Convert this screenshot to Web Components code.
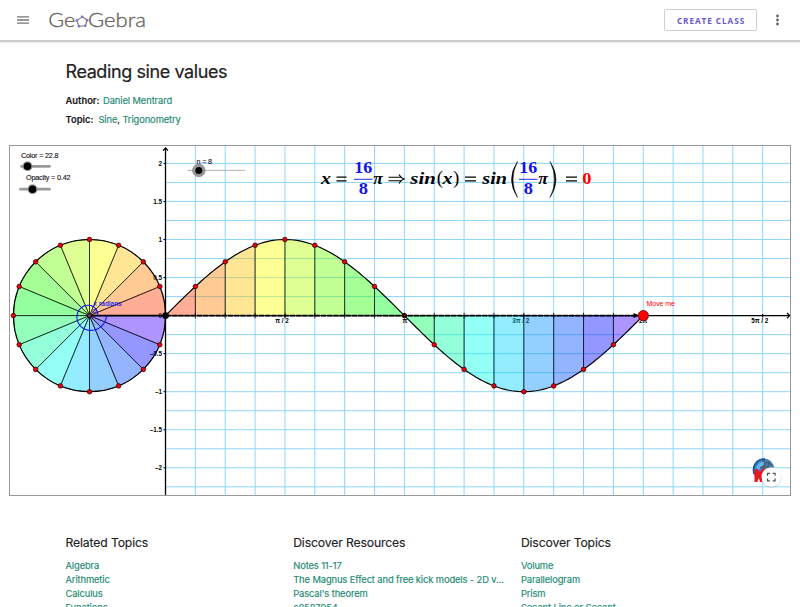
<!DOCTYPE html>
<html lang="en">
<head>
<meta charset="utf-8">
<title>Reading sine values – GeoGebra</title>
<style>
  html, body {
    margin: 0;
    height: 607px;
    overflow: hidden;
    background: #fff;
    font-family: Inter, "Liberation Sans", sans-serif;
    color: #222;
  }
</style>
</head>
<body>
<page-header>
  <geo-logo></geo-logo>
  <outline-button slot="action">CREATE CLASS</outline-button>
</page-header>
<resource-head heading="Reading sine values">
  <meta-line label="Author:"><a>Daniel Mentrard</a></meta-line>
  <meta-line label="Topic:" class="wide"><a>Sine</a>, <a>Trigonometry</a></meta-line>
</resource-head>
<sine-applet n="8"></sine-applet>
<page-footer>
  <link-list heading="Related Topics">
    <a>Algebra</a>
    <a>Arithmetic</a>
    <a>Calculus</a>
    <a>Functions</a>
  </link-list>
  <link-list heading="Discover Resources">
    <a>Notes 11-17</a>
    <a>The Magnus Effect and free kick models - 2D v...</a>
    <a>Pascal's theorem</a>
    <a>c8587954</a>
  </link-list>
  <link-list heading="Discover Topics">
    <a>Volume</a>
    <a>Parallelogram</a>
    <a>Prism</a>
    <a>Secant Line or Secant</a>
  </link-list>
</page-footer>

<script>
class PageHeader extends HTMLElement {
  constructor() {
    super();
    this.attachShadow({ mode: 'open' });
    this.shadowRoot.innerHTML = `
    <style>
      :host {
        display: flex;
        align-items: center;
        box-sizing: border-box;
        height: 42px;
        padding: 0 16px 0 17px;
        border-bottom: 2px solid #cdcdcd;
        box-shadow: 0 1px 1px #eee;
      }
      .menu { margin-right: 20px; }
      .spacer { flex: 1; }
      .more { margin-left: 14px; }
      svg { display: block; }
    </style>
    <svg class="menu" width="12" height="12" viewBox="0 0 12 12">
      <path d="M0 2.8h12M0 6h12M0 9.2h12" stroke="#777" stroke-width="1.3"/>
    </svg>
    <slot></slot>
    <span class="spacer"></span>
    <slot name="action"></slot>
    <svg class="more" width="13" height="14" viewBox="0 0 13 14" fill="#666">
      <circle cx="6.5" cy="3" r="1.4"/><circle cx="6.5" cy="7" r="1.4"/><circle cx="6.5" cy="11" r="1.4"/>
    </svg>
    `;
  }
}

class GeoLogo extends HTMLElement {
  constructor() {
    super();
    this.attachShadow({ mode: 'open' });
    this.shadowRoot.innerHTML = `
    <style>
      :host { display: block; }
      svg { display: block; }
      text {
        font: 300 19.5px Lato, "Liberation Sans", sans-serif;
        fill: #666;
        stroke: #666;
        stroke-width: 0.35px;
      }
    </style>
    <svg width="98" height="20" viewBox="49 10 98 20">
      <text x="48.3" y="26.8" textLength="27" lengthAdjust="spacingAndGlyphs">Ge</text>
      <text x="88" y="26.8" textLength="58" lengthAdjust="spacingAndGlyphs">Gebra</text>
      <path d="M82.2 16.8L87.2 20.2L85.2 25.7L79 26.2L76.8 20.6Z" fill="none" stroke="#777" stroke-width="1.1"/>
      <g fill="#7872dc">
        <circle cx="82.2" cy="16.8" r="1.3"/><circle cx="87.2" cy="20.2" r="1.3"/>
        <circle cx="85.2" cy="25.7" r="1.3"/><circle cx="79" cy="26.2" r="1.3"/>
        <circle cx="76.8" cy="20.6" r="1.3"/>
      </g>
    </svg>
    `;
  }
}

class OutlineButton extends HTMLElement {
  constructor() {
    super();
    this.attachShadow({ mode: 'open' });
    this.shadowRoot.innerHTML = `
    <style>
      :host {
        display: flex;
        align-items: center;
        justify-content: center;
        box-sizing: border-box;
        width: 93px;
        height: 22px;
        padding: 1px 0 0 1px;
        border: 1px solid #cfcfd2;
        border-radius: 2px;
        color: #6557d2;
        font: 700 8.2px "Open Sans", sans-serif;
        letter-spacing: 0.95px;
        white-space: nowrap;
      }
    </style>
    <slot></slot>
    `;
  }
}

class ResourceHead extends HTMLElement {
  constructor() {
    super();
    this.attachShadow({ mode: 'open' });
    this.shadowRoot.innerHTML = `
    <style>
      :host {
        display: block;
        box-sizing: border-box;
        height: 103px;
        padding: 18px 65.5px 0;
      }
      h1 {
        margin: 0 0 7px;
        font-size: 18px;
        line-height: 24px;
        font-weight: 400;
        letter-spacing: -0.41px;
        -webkit-text-stroke: 0.2px;
      }
    </style>
    <h1></h1>
    <slot></slot>
    `;
  }

  connectedCallback() {
    this.shadowRoot.querySelector('h1').textContent = this.getAttribute('heading');
  }
}

class MetaLine extends HTMLElement {
  constructor() {
    super();
    this.attachShadow({ mode: 'open' });
    this.shadowRoot.innerHTML = `
    <style>
      :host {
        display: block;
        font-size: 9.4px;
        line-height: 19px;
        letter-spacing: -0.11px;
        -webkit-text-stroke: 0.15px;
      }
      b { font-weight: 600; margin-right: 3.5px; letter-spacing: 0; }
      :host(.wide) b { margin-right: 5px; }
      ::slotted(a) { color: #1a8971; }
    </style>
    <b></b><slot></slot>
    `;
  }

  connectedCallback() {
    this.shadowRoot.querySelector('b').textContent = this.getAttribute('label');
  }
}

class PageFooter extends HTMLElement {
  constructor() {
    super();
    this.attachShadow({ mode: 'open' });
    this.shadowRoot.innerHTML = `
    <style>
      :host {
        display: grid;
        grid-template-columns: 212px 212px 212px;
        gap: 15.7px;
        padding: 37px 0 0 65.5px;
      }
    </style>
    <slot></slot>
    `;
  }
}

class LinkList extends HTMLElement {
  constructor() {
    super();
    this.attachShadow({ mode: 'open' });
    this.shadowRoot.innerHTML = `
    <style>
      :host { display: flex; flex-direction: column; }
      h2 {
        margin: 0 0 7px;
        font-size: 12.2px;
        line-height: 19px;
        font-weight: 400;
        letter-spacing: -0.13px;
        -webkit-text-stroke: 0.15px;
      }
      ::slotted(a) {
        font-size: 9.4px;
        line-height: 14px;
        letter-spacing: -0.12px;
        -webkit-text-stroke: 0.15px;
        color: #1a8971;
        white-space: nowrap;
      }
    </style>
    <h2></h2>
    <slot></slot>
    `;
  }

  connectedCallback() {
    this.shadowRoot.querySelector('h2').textContent = this.getAttribute('heading');
  }
}

class SineApplet extends HTMLElement {
  constructor() {
    super();
    this.attachShadow({ mode: 'open' });
    this.shadowRoot.innerHTML = `
    <style>
      :host { display: block; width: 782px; margin-left: 9px; }
      svg { display: block; font-family: "Liberation Sans", Arial, sans-serif; }
      .axis { font-size: 6.3px; font-weight: bold; fill: #000; }
      .label { font-size: 7.2px; fill: #111; stroke: #111; stroke-width: 0.12px; }
      .math { font: italic bold 17px "Liberation Serif", serif; }
      .math .up { font-style: normal; font-size: 16.5px; }
      .math .paren { font-weight: 400; font-size: 19px; }
      .blue { fill: #1212f0; }
      .red { fill: #f00; }
    </style>
    <svg width="782" height="351" viewBox="9 145 782 351"></svg>
    `;
    // origin of the graph, pixels per unit, pixels per strip
    this._ox = 165.5;
    this._oy = 315.6;
    this._unit = 76.1;
    this._step = 29.86;
    this._cx = 89.5;
  }

  connectedCallback() {
    this._n = Number(this.getAttribute('n'));
    this.shadowRoot.querySelector('svg').innerHTML =
      this._grid() + this._axes() + this._strips() + this._circle() +
      this._sliders() + this._formula() + this._corner() +
      '<rect x="9.5" y="145.5" width="781" height="350" fill="none" stroke="#999"/>';
  }

  _color(i) {
    return `hsla(${14 + i * 16}, 100%, 50%, 0.42)`;
  }

  _dot(x, y) {
    return `<circle cx="${x}" cy="${y}" r="2.3" fill="#e8000a" stroke="#200" stroke-width="0.7"/>`;
  }

  _grid() {
    let d = '';
    for (let i = 1; i <= 20; i++) {
      d += `M${this._ox + i * this._step} 146V495`;
    }
    for (let i = -9; i <= 8; i++) {
      d += `M${this._ox} ${this._oy - i * this._unit / 4}H790`;
    }
    return `<path d="${d}" stroke="#8fd6fb" fill="none"/>`;
  }

  _axes() {
    let out = `<path d="M165.5 148V495" stroke="#000" stroke-width="1.3"/>
      <path d="M163 150.7L165.5 148L168 150.7M787 313L789.7 315.6L787 318.2" stroke="#000" stroke-width="1.2" fill="none"/>
      <path d="M165 315.6H789" stroke="#000" stroke-width="1.2"/>`;
    for (let v = -2; v <= 2; v += 0.5) {
      const y = this._oy - v * this._unit;
      out += `<path d="M163.5 ${y}H166" stroke="#000"/>
        <text class="axis" x="162" y="${y + 2.1}" text-anchor="end">${String(v).replace('-', '–')}</text>`;
    }
    [['π / 2', 282, 4], ['π', 405, 8], ['3π / 2', 520.7, 12], ['2π', 643.2, 16], ['5π / 2', 759.7, 20]].forEach(([t, x, i]) => {
      out += `<path d="M${this._ox + i * this._step} 314V317.5" stroke="#000"/>
        <text class="axis" x="${x}" y="323.4" text-anchor="middle">${t}</text>`;
    });
    return out;
  }

  _strips() {
    let fills = '', lines = '', dots = '', curve = '';
    const count = this._n * 2;
    const at = t => [this._ox + t * this._step, this._oy - this._unit * Math.sin(t * Math.PI / this._n)];
    for (let i = 0; i < count; i++) {
      let d = `M${at(i)[0]} ${this._oy}`;
      for (let k = 0; k <= 10; k++) {
        d += 'L' + at(i + k / 10).join(' ');
        curve += (curve ? 'L' : 'M') + at(i + k / 10).join(' ');
      }
      fills += `<path d="${d}V${this._oy}Z" fill="${this._color(i)}"/>`;
      if (i) {
        const [x, y] = at(i);
        lines += `M${x} ${y}V${this._oy}M${x} ${this._oy - 2.8}v5.6`;
        dots += this._dot(x, y);
      }
    }
    return `${fills}
      <path d="${lines}" stroke="#000" stroke-width="0.8"/>
      <path d="${curve}" fill="none" stroke="#000" stroke-width="1.2"/>
      <path d="M166 315.6H636" stroke="#000" stroke-width="1.7" stroke-dasharray="5 1.2"/>
      <path d="M633.5 313.1L639.5 315.6L633.5 318.1Z"/>
      ${dots}
      <circle cx="404.4" cy="315.6" r="2.4" fill="#300"/>
      <circle cx="643.3" cy="315.6" r="5.2" fill="#f00" stroke="#300" stroke-width="0.7"/>
      <text class="red" x="646.5" y="305.6" font-size="7" textLength="28.5">Move me</text>`;
  }

  _circle() {
    const cx = this._cx, cy = this._oy, r = this._unit;
    let fills = '', dots = '', arc = '';
    const count = this._n * 2;
    const at = i => {
      const a = i * Math.PI / this._n;
      return [cx + r * Math.cos(a), cy - r * Math.sin(a)];
    };
    for (let i = 0; i < count; i++) {
      fills += `<path d="M${cx} ${cy}L${at(i).join(' ')}A${r} ${r} 0 0 0 ${at(i + 1).join(' ')}Z" fill="${this._color(i)}" stroke="#000" stroke-width="0.6"/>`;
      if (i) dots += this._dot(...at(i));
    }
    // the angle mark winds outwards
    for (let k = 0; k <= 60; k++) {
      const a = k / 60 * 2 * Math.PI;
      const s = 8 + 9 * k / 60;
      arc += (k ? 'L' : 'M') + (cx + s * Math.cos(a)) + ' ' + (cy - s * Math.sin(a));
    }
    return `${fills}
      <circle cx="${cx}" cy="${cy}" r="${r}" fill="none" stroke="#000" stroke-width="1.2"/>
      <path d="M${cx} ${cy}H165" stroke="#000" stroke-width="1.8"/>
      <path d="${arc}" fill="none" stroke="#11f" stroke-width="1.1"/>
      <g class="blue" stroke="#1212f0" stroke-width="0.15">
        <text x="93.5" y="306.4" font-size="6.5" textLength="28">x radians</text>
        <text x="92" y="313" font-size="6">O</text>
      </g>
      ${dots}
      <circle cx="${cx}" cy="${cy}" r="1.9" fill="#83378d" stroke="#000" stroke-width="0.8"/>
      <circle cx="165.6" cy="${cy}" r="3.4"/>`;
  }

  _sliders() {
    return `
      <text class="label" x="21" y="157.6" textLength="37.5">Color = 22.8</text>
      <path d="M21.5 166.3H49.5M20.5 189.2H49.5" stroke="#999" stroke-width="2.8" stroke-linecap="round"/>
      <circle cx="27.5" cy="166.3" r="5" fill="#999"/><circle cx="27.5" cy="166.3" r="3.8"/>
      <text class="label" x="26" y="180.3" textLength="44.5">Opacity = 0.42</text>
      <circle cx="32.5" cy="189.2" r="5" fill="#999"/><circle cx="32.5" cy="189.2" r="3.8"/>
      <path d="M187.5 170.4H245" stroke="#aaa" stroke-width="0.9"/>
      <circle cx="198.8" cy="170.4" r="6.3" fill="#999" stroke="#777" stroke-width="0.6"/>
      <circle cx="198.8" cy="170.4" r="3.5"/>
      <text class="label" x="196.5" y="164" textLength="15.5">n = 8</text>`;
  }

  _formula() {
    const n = this._n;
    return `<g class="math">
      <text x="321" y="183.7" textLength="10" lengthAdjust="spacingAndGlyphs">x</text>
      <path d="M336.5 177.2H346.5M336.5 180.8H346.5" stroke="#000" stroke-width="1.2"/>
      <text class="blue up" x="354.3" y="173.3" textLength="18" lengthAdjust="spacingAndGlyphs">${2 * n}</text>
      <path d="M354 179.3H372.5M519 179.3H537.5" stroke="#1212f0" stroke-width="0.9"/>
      <text class="blue up" x="358.7" y="193.8" textLength="9.2" lengthAdjust="spacingAndGlyphs">${n}</text>
      <text x="373.2" y="183.7" textLength="9.6" lengthAdjust="spacingAndGlyphs">π</text>
      <path d="M388.5 177.2H402M388.5 180.8H402M399 174.5C400.2 177 401.8 178.3 404 179C401.8 179.7 400.2 181 399 183.5" stroke="#000" stroke-width="1.1" fill="none"/>
      <text x="410.3" y="183.7" textLength="25.5" lengthAdjust="spacingAndGlyphs">sin</text>
      <text class="up paren" x="436.8" y="183.7">(</text>
      <text x="442.5" y="183.7" textLength="10" lengthAdjust="spacingAndGlyphs">x</text>
      <text class="up paren" x="453" y="183.7">)</text>
      <path d="M465 177.2H476M465 180.8H476" stroke="#000" stroke-width="1.2"/>
      <text x="482.3" y="183.7" textLength="24.8" lengthAdjust="spacingAndGlyphs">sin</text>
      <path d="M517.5 161.5Q505.5 179.5 517.5 197.5Q508.5 179.5 517.5 161.5ZM550 161.5Q562 179.5 550 197.5Q559 179.5 550 161.5Z" stroke="#000" stroke-width="0.5"/>
      <text class="blue up" x="519.3" y="173.3" textLength="18" lengthAdjust="spacingAndGlyphs">${2 * n}</text>
      <text class="blue up" x="523.7" y="193.8" textLength="9.2" lengthAdjust="spacingAndGlyphs">${n}</text>
      <text x="538.2" y="183.7" textLength="9.6" lengthAdjust="spacingAndGlyphs">π</text>
      <path d="M566 177.2H577M566 180.8H577" stroke="#000" stroke-width="1.2"/>
      <text class="red up" x="582.3" y="183.9" textLength="9.2" lengthAdjust="spacingAndGlyphs">0</text>
    </g>`;
  }

  _corner() {
    return `
      <circle cx="763.5" cy="469.3" r="10.8" fill="#3583c6"/>
      <path d="M754 474C752 464 758 459 765 459" stroke="#1d5c95" stroke-width="1.6" fill="none"/>
      <path d="M756 468Q759 460 766 461L763 465L759 470Z" fill="#62b6f0"/>
      <path d="M762 461L768 463L772 465M760 468L764 466L769 468L773 467M763 459L765 464L763 470M769 461L768 466L770 471" stroke="#56504c" stroke-width="1.1" fill="none"/>
      <path d="M754.5 482V469L758 469.5L760 472L763 468.5H765V472L762 474L762.5 482H760L758.7 477L757.4 482Z" fill="#f0141c"/>
      <circle cx="771.5" cy="477.7" r="10.2" fill="#000" opacity="0.13"/>
      <circle cx="771.3" cy="477" r="9.8" fill="#fff"/>
      <path d="M767.5 475.8V473.3H770M772.6 473.3H775.1V475.8M775.1 478.4V480.9H772.6M770 480.9H767.5V478.4" stroke="#555" stroke-width="1.2" fill="none"/>`;
  }
}

customElements.define('page-header', PageHeader);
customElements.define('geo-logo', GeoLogo);
customElements.define('outline-button', OutlineButton);
customElements.define('resource-head', ResourceHead);
customElements.define('meta-line', MetaLine);
customElements.define('page-footer', PageFooter);
customElements.define('link-list', LinkList);
customElements.define('sine-applet', SineApplet);
</script>
</body>
</html>
